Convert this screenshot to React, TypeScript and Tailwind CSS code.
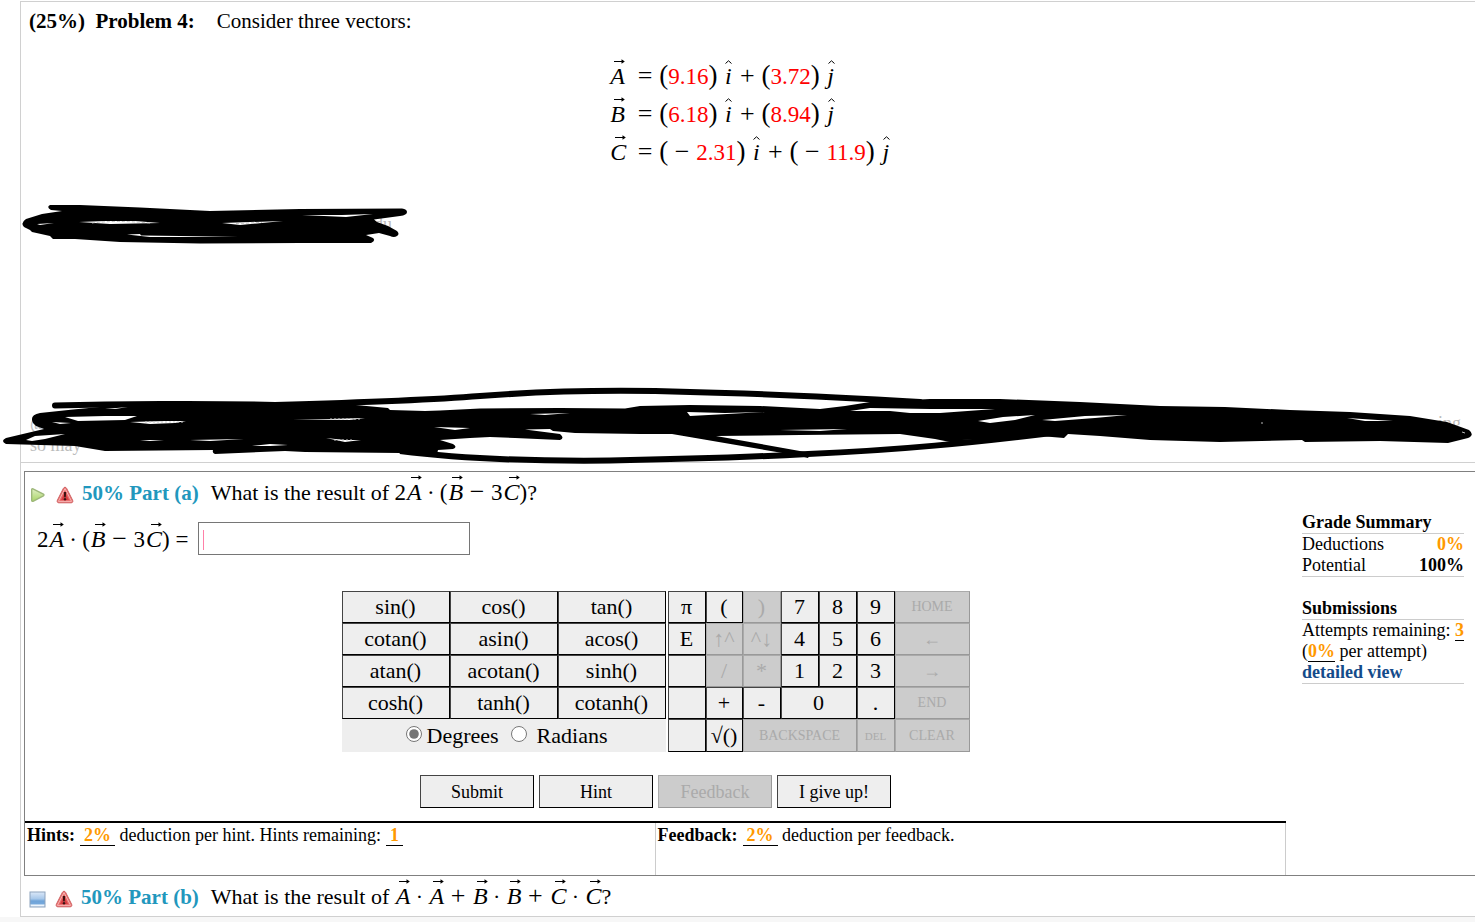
import { useState } from "react";
import type { ReactNode } from "react";
import clsx from "clsx";

const functionKeys = [
  "sin()", "cos()", "tan()",
  "cotan()", "asin()", "acos()",
  "atan()", "acotan()", "sinh()",
  "cosh()", "tanh()", "cotanh()",
];

type Key = { label: string; off?: boolean; size?: string; span?: string };

const numberKeys: Key[] = [
  { label: "π" },
  { label: "(" },
  { label: ")", off: true },
  { label: "7" },
  { label: "8" },
  { label: "9" },
  { label: "HOME", off: true, size: "text-sm" },
  { label: "E" },
  { label: "↑^", off: true },
  { label: "^↓", off: true },
  { label: "4" },
  { label: "5" },
  { label: "6" },
  { label: "←", off: true, size: "text-lg" },
  { label: "" },
  { label: "/", off: true },
  { label: "*", off: true },
  { label: "1" },
  { label: "2" },
  { label: "3" },
  { label: "→", off: true, size: "text-lg" },
  { label: "" },
  { label: "+" },
  { label: "-" },
  { label: "0", span: "col-span-2" },
  { label: "." },
  { label: "END", off: true, size: "text-sm" },
  { label: "" },
  { label: "√()" },
  { label: "BACKSPACE", off: true, size: "text-sm", span: "col-span-3" },
  { label: "DEL", off: true, size: "text-[11px]" },
  { label: "CLEAR", off: true, size: "text-sm" },
];

const vectors = [
  { name: "A", i: "9.16", j: "3.72" },
  { name: "B", i: "6.18", j: "8.94" },
  { name: "C", i: "2.31", j: "11.9", negative: true },
];

function Vec({ children }: { children: string }) {
  return (
    <span className="relative inline-block pl-px text-2xl leading-6 italic">
      {children}
      <svg
        className="absolute right-0 -top-[5px] h-[6px] w-[11px]"
        viewBox="0 0 11 6"
        aria-hidden="true"
      >
        <path d="M0 2.500H10" fill="none" stroke="#000" />
        <path d="M7.5 0.3L10.800 2.500L7.5 4.700Z" />
      </svg>
    </span>
  );
}

function Hat({ children }: { children: string }) {
  return (
    <span className="relative mr-px ml-[7px] inline-block w-2 text-center text-2xl leading-6 italic">
      {children}
      <svg
        className="absolute left-px -top-1 h-[4px] w-[7px]"
        viewBox="0 0 7 4"
        aria-hidden="true"
      >
        <path d="M0.5 3.5L3.5 0.8L6.5 3.5" fill="none" stroke="#000" />
      </svg>
    </span>
  );
}

function Op({ children }: { children: string }) {
  return <span className="mx-[6px] inline-block w-4 text-center text-[26px] leading-6">{children}</span>;
}

function Dot() {
  return <span className="inline-block w-[18px] text-center">·</span>;
}

function Component({ value, negative }: { value: string; negative?: boolean }) {
  return (
    <>
      <span className="text-[27px]">(</span>
      {negative && <Op>−</Op>}
      <span className="text-[#f00]">{value}</span>
      <span className="text-[27px]">)</span>
    </>
  );
}

function Product() {
  return (
    <span className="whitespace-nowrap text-[23px]">
      2<Vec>A</Vec>
      <Dot />(<Vec>B</Vec>
      <Op>−</Op>3<Vec>C</Vec>)
    </span>
  );
}

function WarningIcon() {
  return (
    <svg className="size-[18px]" viewBox="0 0 18 18" aria-hidden="true">
      <path
        d="M9 1.2C9.8 1.2 10.3 1.8 10.7 2.5L16.6 14.2C17.2 15.6 16.7 16.8 15.2 16.8H2.8C1.3 16.8 .8 15.6 1.4 14.2L7.3 2.5C7.7 1.8 8.2 1.2 9 1.2Z"
        fill="#e9696a"
        stroke="#cf6465"
      />
      <path d="M9 2.6L15.6 15.4H2.4Z" fill="none" stroke="#f6b5b3" />
      <path d="M7.8 6H10.2L9.8 11.4H8.2Z" fill="#3b1010" />
      <path d="M5 14L8 8V14ZM13 14L10 8V14Z" fill="#d83c40" />
      <circle cx="9" cy="13.2" r="1.2" fill="#3b1010" />
    </svg>
  );
}

function PlayIcon() {
  return (
    <svg className="size-4" viewBox="0 0 16 16" aria-hidden="true">
      <defs>
        <linearGradient id="play" x1="0" y1="0" x2="0" y2="1">
          <stop offset="0" stopColor="#e0efc4" />
          <stop offset="1" stopColor="#a9d566" />
        </linearGradient>
      </defs>
      <path
        d="M1.7 2.6C1.7 1.8 2.3 1.5 3 1.8L13.4 7.2C14.1 7.6 14.1 8.4 13.4 8.8L3 14.3C2.3 14.6 1.7 14.2 1.7 13.5Z"
        fill="url(#play)"
        stroke="#9db77a"
        strokeWidth="1.4"
      />
    </svg>
  );
}

function PanelIcon() {
  return (
    <svg className="size-[17px]" viewBox="0 0 17 17" aria-hidden="true">
      <defs>
        <linearGradient id="panel" x1="0" y1="0" x2="0" y2="1">
          <stop offset="0" stopColor="#dbe8f8" />
          <stop offset=".45" stopColor="#a8c8ea" />
          <stop offset=".6" stopColor="#6fa3d8" />
          <stop offset=".8" stopColor="#76a9dc" />
          <stop offset=".85" stopColor="#d8e7f7" />
        </linearGradient>
      </defs>
      <rect x="1" y="1" width="15" height="15" fill="url(#panel)" stroke="#8ea3bd" />
      <path d="M2 14.5H15" stroke="#eef5fc" />
    </svg>
  );
}

function SmallScribble() {
  return (
    <svg
      className="absolute inset-x-0 top-0 h-full w-full"
      viewBox="0 190 1475 70"
      preserveAspectRatio="none"
      aria-hidden="true"
    >
      <path d="M50 205L80 205L140 207.500L210 211L300 209L402 208.500Q407 209 407 212Q407 215 400 216L374 219.500L377 222L388 226L397 231Q400 234 397 236Q394 238 390 236L379 233L366 235L373 238Q376 241 371 243L300 243L200 243.500L120 242L75 239L53 239L50 236L32 232L30 230L24 227Q20 223 26 219L42 214L62 211L51 210Q46 207 50 205Z" />
      <path
        d="M79 222L105 221L135 221L160 223L110 224ZM222 223L250 222L283 221L240 225ZM127 234.500L140 234L141 235.500L180 236L238 237L150 237ZM302 215L342 215L373 214L346 217ZM37 224L54 223L40 225Z"
        fill="#fff"
      />
      <path
        d="M92 223Q115 220 150 223M236 223.500L262 222.500"
        stroke="#c4c4c4"
        strokeDasharray="3 2"
        fill="none"
      />
    </svg>
  );
}

function LargeScribble() {
  return (
    <svg
      className="absolute inset-x-0 top-0 h-full w-full"
      viewBox="0 380 1475 90"
      preserveAspectRatio="none"
      aria-hidden="true"
    >
      <path
        d="M55 405.500C110 404 210 403 275 405C380 402 430 400 480 396C560 390 630 390 690 392C780 394 850 398 920 402"
        fill="none"
        stroke="#000"
        strokeWidth="6"
        strokeLinecap="round"
      />
      <path
        d="M400 451C470 460 560 461 610 460.500C700 459 770 456 808 454C900 450 970 443 1060 432"
        fill="none"
        stroke="#000"
        strokeWidth="6"
      />
      <path d="M33 423Q29 415 40 413L73 409.500L110 406L160 404L275 403L345 404L388 408L390 410L425 411L440 410.500L480 408.500L560 408L625 408.500L640 406L690 405L760 406L820 409L845 406L870 402L930 399L1000 399L1080 402L1160 406L1225 407L1290 410L1350 412L1410 416L1447 422L1469 430Q1475 435 1468 438L1448 443L1380 441L1305 442L1302 440L1220 442L1150 440L1100 436L1068 434L1064 438L1040 436L1010 439L962 440Q966 443 960 444L935 439L900 434L800 435L716 436L811 453L808 458L800 456L672 434L640 434L575 433L553 431L550 429L525 429.500L560 434Q565 438 560 440L515 438L490 437L470 438L440 440L453 444Q458 447 453 449L438 450L437 454L400 453L305 452L285 451L215 454Q212 453 213 450L105 451L75 446L6 444Q0 441 6 438L44 429L36 426Z" />
      <path
        d="M65 417L105 416L137 416L125 420L78 421ZM130 422L165 421L186 421L175 423L150 424ZM26 440L35 436L65 434L45 439L32 441ZM52 422L71 423L60 424ZM105 409L128 407L115 409ZM293 419.500L330 419L365 418L350 420ZM326 438L345 440L361 440L345 442ZM434 427L470 428L455 430ZM252 446L270 444L288 445L270 446ZM140 440L164 440L150 441ZM190 440L244 439L210 441ZM530 414L570 413L545 415ZM687 412L725 413L765 412L690 416ZM850 411L870 408L930 409L995 409L940 413L910 413L890 411ZM978 421L1003 417L1035 415L1015 420L990 423ZM1042 420L1085 416L1127 415L1095 418L1055 421ZM780 430L847 429L820 431ZM1347 418L1393 421L1365 421Z"
        fill="#fff"
      />
      <path d="M145 422L183 422M330 419H360M334 440H352" stroke="#c7c7c7" strokeDasharray="2 2" />
      <path d="M1261 423H1263M1462 432L1465 433" stroke="#bbb" />
    </svg>
  );
}

function PartHeading({ icon, title, children }: { icon: ReactNode; title: string; children: ReactNode }) {
  return (
    <div className="flex h-10 items-center">
      <span className="mt-[6px] w-[26px]">{icon}</span>
      <span className="mt-[6px] w-[26px]">
        <WarningIcon />
      </span>
      <div className="mt-[2px] flex items-baseline whitespace-nowrap">
        <h2 className="mr-3 text-[21px] font-bold text-[#2197bd]">{title}</h2>
        <p className="text-[22px]">{children}</p>
      </div>
    </div>
  );
}

const onKey =
  "border border-t-[#444] border-r-black border-b-black border-l-[#444] bg-[#eee] text-black";
const offKey =
  "border border-t-[#aaa] border-r-[#999] border-b-[#999] border-l-[#aaa] bg-[#ccc] text-[#aaa]";

function Keypad() {
  const [unit, setUnit] = useState("degrees");

  return (
    <div className="flex justify-center gap-[2px] text-[22px] leading-7">
      <div className="grid grid-cols-[repeat(3,108px)] grid-rows-[repeat(4,32px)_33px] bg-[#eee]">
        {functionKeys.map((k) => (
          <button key={k} className={onKey}>
            {k}
          </button>
        ))}
        <div className="col-span-3 flex items-center justify-center pl-[6px]">
          {["Degrees", "Radians"].map((label, i) => (
            <label key={label} className={clsx("flex items-center", i === 0 ? "mr-3 gap-[5px]" : "gap-[10px]")}>
              <input
                type="radio"
                name="unit"
                className="mb-1 size-4 accent-[#757575]"
                checked={unit === label.toLowerCase()}
                onChange={() => setUnit(label.toLowerCase())}
              />
              {label}
            </label>
          ))}
        </div>
      </div>
      <div className="grid grid-cols-[38px_37px_repeat(4,38px)_75px] grid-rows-[repeat(4,32px)_33px]">
        {numberKeys.map((k, i) => (
          <button
            key={i}
            disabled={k.off}
            aria-label={k.label || "blank"}
            className={clsx(k.off ? offKey : onKey, k.size, k.span)}
          >
            {k.label}
          </button>
        ))}
      </div>
    </div>
  );
}

function Amount({ children }: { children: string }) {
  return (
    <span className="ml-[5px] inline-block border-b border-black px-1 leading-5 font-bold text-[#f90]">
      {children}
    </span>
  );
}

function GradeSummary() {
  return (
    <aside className="w-[189px] shrink-0 pr-[11px] pl-4 text-lg leading-[21px] whitespace-nowrap">
      <h3 className="border-b border-[#ccc] font-bold">Grade Summary</h3>
      <dl className="grid grid-cols-[1fr_auto] border-b border-[#ccc]">
        <dt>Deductions</dt>
        <dd className="text-right font-bold text-[#f90]">0%</dd>
        <dt>Potential</dt>
        <dd className="text-right font-bold">100%</dd>
      </dl>
      <h3 className="mt-[21px] border-b border-[#ccc] font-bold">Submissions</h3>
      <div className="border-b border-[#ccc]">
        <p>
          Attempts remaining:{" "}
          <span className="inline-block border-b border-black leading-5 font-bold text-[#f90]">3</span>
        </p>
        <p>
          (<span className="inline-block border-b border-black leading-5 font-bold text-[#f90]">0%</span>{" "}
          per attempt)
        </p>
        <a href="#details" className="block font-bold text-[#144b8a]">
          detailed view
        </a>
      </div>
    </aside>
  );
}

export default function App() {
  return (
    <div className="min-h-screen overflow-hidden bg-[#f7f7f7] font-['Liberation_Serif',serif] text-black">
      <div className="bg-white pt-px pl-5">
        <main className="border-y border-l border-[#d0d0d0]">
          <section className="border-b border-[#d0d0d0]">
            <div className="flex h-10 items-center pl-2 text-[21px]">
              <h1 className="font-bold whitespace-pre">(25%)  Problem 4:</h1>
              <p className="ml-[22px]">Consider three vectors:</p>
            </div>

            <div className="mt-[14px] flex justify-center pl-1">
              <div className="text-[23px]">
                {vectors.map((v) => (
                  <div key={v.name} className="flex h-[38px] items-baseline leading-[38px]">
                    <span className="w-[22px] leading-6">
                      <Vec>{v.name}</Vec>
                    </span>
                    <Op>=</Op>
                    <Component value={v.i} negative={v.negative} />
                    <span className="leading-6">
                      <Hat>i</Hat>
                    </span>
                    <Op>+</Op>
                    <Component value={v.j} negative={v.negative} />
                    <span className="leading-6">
                      <Hat>j</Hat>
                    </span>
                  </div>
                ))}
              </div>
            </div>

            <div className="relative mt-5 -ml-[21px] h-[70px]">
              <p className="pt-6 pl-[374px] text-lg leading-5 text-[#bbb]">du</p>
              <SmallScribble />
            </div>

            <div className="relative mt-[120px] -ml-[21px] h-[82px]">
              <div className="pt-8 pr-[14px] pl-[30px] text-lg leading-[22px] text-[#bbb]">
                <p className="flex justify-between">
                  <span>@</span>
                  <span>ing</span>
                </p>
                <p>so may</p>
              </div>
              <div className="absolute inset-x-0 top-0 h-[90px]">
                <LargeScribble />
              </div>
            </div>
          </section>

          <section className="mt-2 ml-[3px] border border-r-0 border-[#808080]">
            <div className="pl-[5px]">
              <PartHeading icon={<PlayIcon />} title="50% Part (a)">
                What is the result of <Product />?
              </PartHeading>
            </div>
            <div className="flex">
              <div className="min-w-0 flex-1">
                <div className="mt-[10px] flex h-[33px] items-center pl-3">
                  <label htmlFor="answer" className="mt-1 mr-[10px] text-[23px]">
                    <Product /> =
                  </label>
                  <span className="relative">
                    <input
                      id="answer"
                      className="block h-[33px] w-[272px] border border-[#767676] bg-white px-2 text-xl outline-none"
                    />
                    <span className="absolute top-2 left-[5px] h-5 w-px bg-[#ff80a8]" />
                  </span>
                </div>
                <div className="mt-9">
                  <Keypad />
                </div>
                <div className="mt-[23px] flex justify-center gap-[5px] text-lg">
                  <button className={clsx("h-[33px] w-[114px]", onKey)}>Submit</button>
                  <button className={clsx("h-[33px] w-[114px]", onKey)}>Hint</button>
                  <button disabled className={clsx("h-[33px] w-[114px]", offKey)}>
                    Feedback
                  </button>
                  <button className={clsx("h-[33px] w-[114px]", onKey)}>I give up!</button>
                </div>
                <div className="mt-[13px] grid h-[54px] grid-cols-2 border-t-2 border-black text-lg leading-6">
                  <p className="border-r border-[#ccc] pl-[2px]">
                    <b>Hints:</b>
                    <Amount>2%</Amount> deduction per hint. Hints remaining:<Amount>1</Amount>
                  </p>
                  <p className="border-r border-[#ccc] pl-[2px]">
                    <b>Feedback:</b>
                    <Amount>2%</Amount> deduction per feedback.
                  </p>
                </div>
              </div>
              <GradeSummary />
            </div>
          </section>

          <section className="pl-2">
            <PartHeading icon={<PanelIcon />} title="50% Part (b)">
              What is the result of{" "}
              <Vec>A</Vec>
              <Dot />
              <Vec>A</Vec>
              <Op>+</Op>
              <Vec>B</Vec>
              <Dot />
              <Vec>B</Vec>
              <Op>+</Op>
              <Vec>C</Vec>
              <Dot />
              <Vec>C</Vec>?
            </PartHeading>
          </section>
        </main>
      </div>
    </div>
  );
}
